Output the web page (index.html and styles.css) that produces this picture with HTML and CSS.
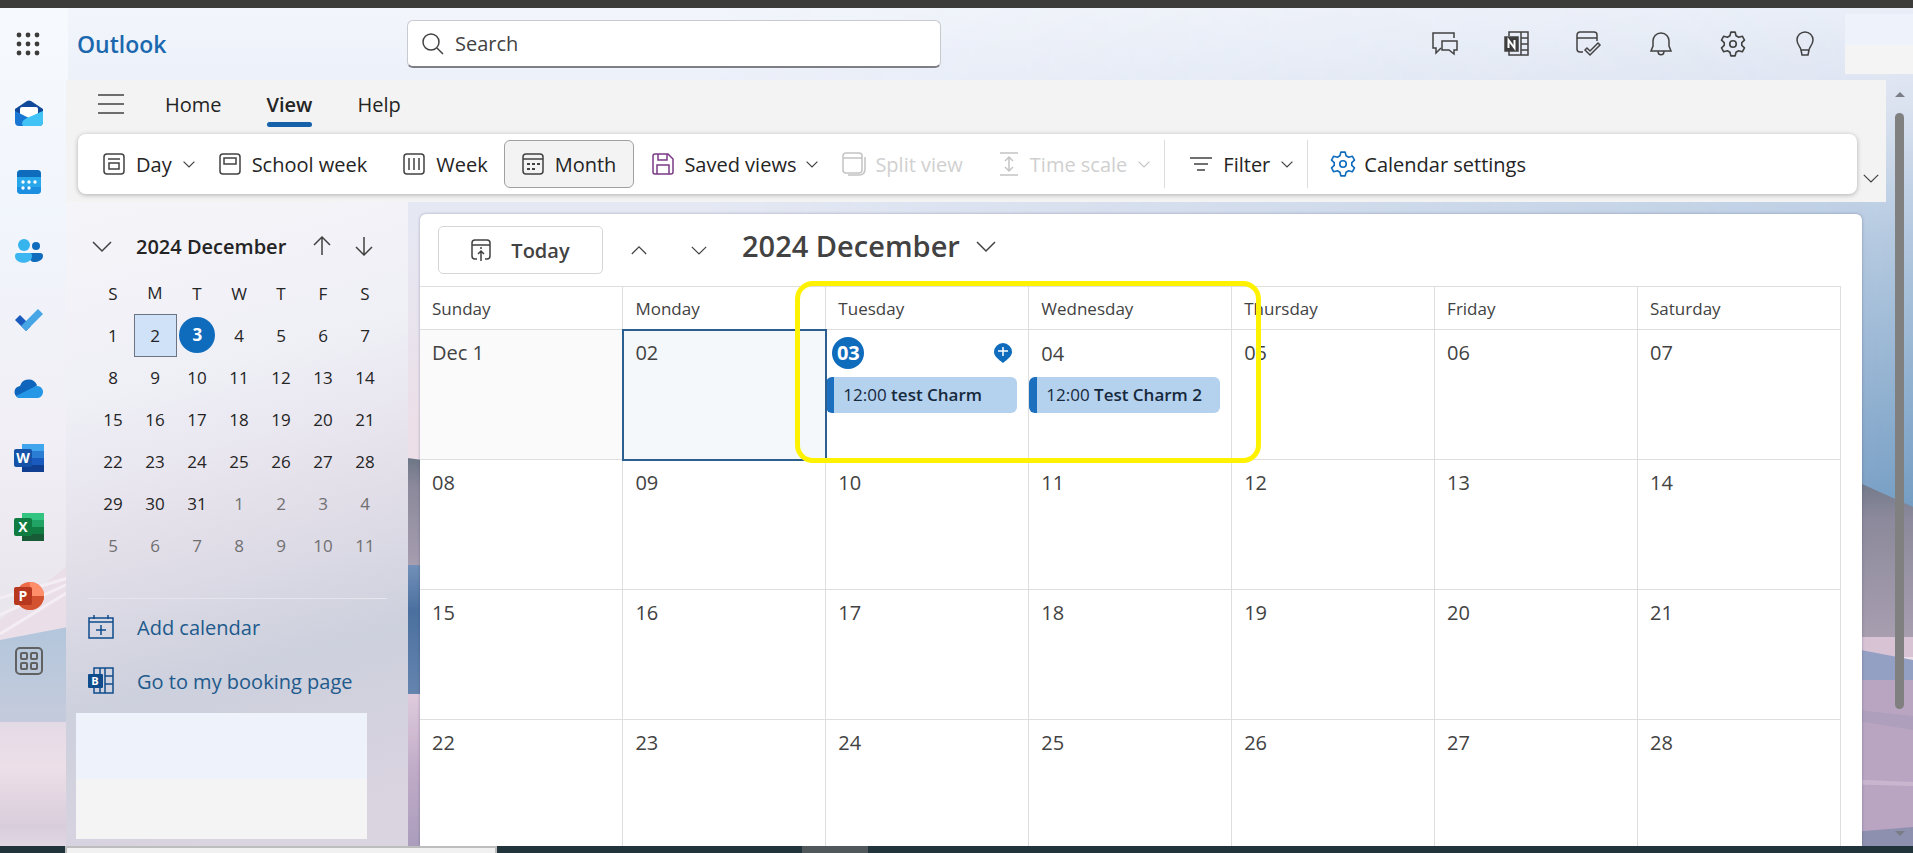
FILE: index.html
```html
<!DOCTYPE html>
<html lang="en">

<head>
    <meta charset="utf-8">
    <meta name="viewport" content="width=device-width, initial-scale=1">
    <title>Outlook Calendar</title>
    <link rel="stylesheet" href="styles.css">
</head>

<body>
    <!-- shared icons -->
    <svg class="defs" aria-hidden="true">
        <symbol id="down" viewBox="0 0 20 20"><path d="M1 6l9 9 9-9" /></symbol>
        <symbol id="up" viewBox="0 0 20 20"><path d="M1 15l9-9 9 9" /></symbol>
        <symbol id="gear" viewBox="0 0 24 24">
            <circle cx="12" cy="12" r="3" />
            <path d="M10 1h4l.8 3.400 2.400 1.400 3.400-1 2 3.600-2.500 2.300v2.600l2.500 2.300-2 3.600-3.400-1-2.400 1.400L14 23h-4l-.8-3.400-2.400-1.400-3.400 1-2-3.600 2.500-2.300v-2.600L1.400 8.400l2-3.600 3.400 1 2.400-1.400z" stroke-linejoin="round" />
        </symbol>
    </svg>

    <!-- wallpaper -->
    <svg class="wallpaper" viewBox="0 0 1913 853" preserveAspectRatio="none" aria-hidden="true">
        <defs>
            <linearGradient id="sky" x2="0" y2="1">
                <stop offset="0" stop-color="#f3f6fc" />
                <stop offset=".2" stop-color="#e4eaf6" />
                <stop offset=".5" stop-color="#ecdfe8" />
            </linearGradient>
            <linearGradient id="skyRight" x2="0" y2="1">
                <stop offset="0" stop-color="#e9eef7" />
                <stop offset=".2" stop-color="#dbe2f0" />
                <stop offset=".45" stop-color="#b4c9e0" />
                <stop offset="1" stop-color="#719bc2" />
            </linearGradient>
            <linearGradient id="fade">
                <stop offset="0" stop-color="#fff" stop-opacity="0" />
                <stop offset="1" stop-color="#fff" />
            </linearGradient>
            <mask id="fadeMask"><rect x="700" width="1213" height="520" fill="url(#fade)" /></mask>
            <linearGradient id="rock" x2="0" y2="1">
                <stop offset="0" stop-color="#6c7686" />
                <stop offset=".25" stop-color="#8b899b" />
                <stop offset="1" stop-color="#aaa0b2" />
            </linearGradient>
            <linearGradient id="lake" x2="0" y2="1">
                <stop offset="0" stop-color="#7290b8" />
                <stop offset=".35" stop-color="#4b709f" />
                <stop offset="1" stop-color="#6585af" />
            </linearGradient>
            <linearGradient id="sand" x2="0" y2="1">
                <stop offset="0" stop-color="#dfcbdc" />
                <stop offset=".5" stop-color="#bfaac7" />
                <stop offset="1" stop-color="#a99cbb" />
            </linearGradient>
            <linearGradient id="railSky" x2="0" y2="1">
                <stop offset="0" stop-color="#f7fafd" />
                <stop offset=".25" stop-color="#f1f5fc" />
                <stop offset=".5" stop-color="#f2eff6" />
                <stop offset=".7" stop-color="#e9e6ee" />
            </linearGradient>
            <linearGradient id="railLake" x2="0" y2="1">
                <stop offset="0" stop-color="#b3c6dc" />
                <stop offset="1" stop-color="#c5cbdc" />
            </linearGradient>
            <linearGradient id="railSand" x2="0" y2="1">
                <stop offset="0" stop-color="#e4dae6" />
                <stop offset=".35" stop-color="#ecdfe8" />
                <stop offset=".8" stop-color="#d9cddc" />
                <stop offset="1" stop-color="#e4dce6" />
            </linearGradient>
        </defs>
        <rect width="1913" height="853" fill="url(#sky)" />
        <rect x="700" width="1213" height="520" fill="url(#skyRight)" mask="url(#fadeMask)" />
        <path d="M400 457l60 8v110h-60z" fill="url(#rock)" />
        <path d="M400 565h60v130h-60z" fill="url(#lake)" />
        <path d="M400 694h60v159h-60z" fill="url(#sand)" />
        <path d="M1840 474l73 33v140h-73z" fill="url(#rock)" />
        <path d="M1840 637h73v20h-73z" fill="#d8c3d5" />
        <path d="M1840 646l73 14v28h-73z" fill="#939fc3" />
        <path d="M1840 680h73v173h-73z" fill="#b9a5c2" />
        <path d="M1840 708l73 8v14l-73-12z" fill="#ae9fbd" />
        <path d="M1840 779l73 3v4l-73-2z" fill="#c9b6ce" />
        <path d="M1840 833l73-6v26h-73z" fill="#8d90ae" />
        <rect width="68" height="853" fill="url(#railSky)" />
        <path d="M0 620l68-55v65l-68 10z" fill="#eadfe9" />
        <path d="M0 634l68-42M0 615l68-31M0 598l68-20" stroke="#f4eef4" stroke-width="3" />
        <path d="M0 640l68-13v96H0z" fill="url(#railLake)" />
        <path d="M0 722h68v131H0z" fill="url(#railSand)" />
    </svg>

    <div class="browser-edge"></div>

    <header class="header">
        <button class="waffle" aria-label="App launcher">
            <svg width="24" height="24" viewBox="0 0 24 24" fill="#3c3c3c">
                <circle cx="3" cy="3" r="2.400" /><circle cx="12" cy="3" r="2.400" /><circle cx="21" cy="3" r="2.400" />
                <circle cx="3" cy="12" r="2.400" /><circle cx="12" cy="12" r="2.400" /><circle cx="21" cy="12" r="2.400" />
                <circle cx="3" cy="21" r="2.400" /><circle cx="12" cy="21" r="2.400" /><circle cx="21" cy="21" r="2.400" />
            </svg>
        </button>
        <a class="brand" href="#">Outlook</a>
        <label class="search">
            <svg class="icon" width="22" height="22" viewBox="0 0 22 22"><circle cx="9" cy="9" r="8" /><path d="M15 15l6 6" /></svg>
            <input type="search" placeholder="Search" aria-label="Search">
        </label>
        <nav class="header-actions">
            <button aria-label="Chat">
                <svg class="icon" width="26" height="26" viewBox="0 0 26 26"><path d="M22 7V2H1v15h3v5l5-5" /><path d="M10 10h15v9h-3v4l-5-4h-7z" /></svg>
            </button>
            <button aria-label="OneNote feed">
                <svg class="icon" width="26" height="26" viewBox="0 0 26 26"><path d="M5 5V1h19v23H5v-4M17 1v23M17 7h7M17 13h7M17 19h7" /><rect x="1" y="6" width="13" height="14" fill="#3c3c3c" /><path d="M4.500 17V9l6 8V9" stroke="#fff" stroke-width="2" /></svg>
            </button>
            <button aria-label="My day">
                <svg class="icon" width="26" height="26" viewBox="0 0 26 26"><path d="M7 21H4a3 3 0 0 1-3-3V4a3 3 0 0 1 3-3h14a3 3 0 0 1 3 3v6M1 7h20" /><path d="M9 19l2-2 3 3 8-8 2 2-10 10z" /></svg>
            </button>
            <button aria-label="Notifications">
                <svg class="icon" width="26" height="26" viewBox="0 0 26 26"><path d="M13 2c-5 0-8 4-8 8v5l-2 5h20l-2-5v-5c0-4-3-8-8-8zM10 20c0 5 6 5 6 0" /></svg>
            </button>
            <button aria-label="Settings">
                <svg class="icon" width="26" height="26"><use href="#gear" /></svg>
            </button>
            <button aria-label="Tips">
                <svg class="icon" width="26" height="26" viewBox="0 0 26 26"><path d="M9 19c0-3-4-5-4-10a8 8 0 0 1 16 0c0 5-4 7-4 10zM9 19l1 5h6l1-5" /></svg>
            </button>
        </nav>
        <div class="account"></div>
    </header>

    <div class="app">
        <nav class="rail">
            <a href="#" aria-label="Mail">
                <svg width="30" height="28" viewBox="0 0 30 28"><path d="M1 10L13 2q2-1 4 0l12 8v6H1z" fill="#10489a" /><rect x="6" y="8" width="18" height="12" rx="2" fill="#fff" /><path d="M1 12l14 7 14-7v11q0 4-4 4H5q-4 0-4-4z" fill="#1976d2" /><path d="M29 12v11q0 4-4 4H9q-3-5 4-8z" fill="#41c3f5" /></svg>
            </a>
            <a href="#" aria-label="Calendar">
                <svg width="26" height="26" viewBox="0 0 26 26"><rect x="1" y="1" width="24" height="24" rx="4" fill="#28a8ea" /><path d="M1 8V5q0-4 4-4h16q4 0 4 4v3z" fill="#0f6cbd" /><path d="M1 18h24v3q0 4-4 4H5q-4 0-4-4z" fill="#1c8fe0" /><g fill="#fff"><circle cx="7" cy="13" r="1.700" /><circle cx="13" cy="13" r="1.700" /><circle cx="19" cy="13" r="1.700" /><circle cx="7" cy="19" r="1.700" /><circle cx="13" cy="19" r="1.700" /></g></svg>
            </a>
            <a href="#" aria-label="People">
                <svg width="30" height="24" viewBox="0 0 30 24"><circle cx="22" cy="7" r="4" fill="#0f6cbd" /><path d="M16 14h10q3 0 3 3c0 4-5 6-9 6-3 0-4-2-4-4z" fill="#0f6cbd" /><circle cx="10" cy="6" r="6" fill="#36b4ee" /><path d="M4 14h12q2 0 2 3c0 9-17 9-17 0q0-3 3-3z" fill="#3cb6f0" /></svg>
            </a>
            <a href="#" aria-label="To Do">
                <svg width="30" height="24" viewBox="0 0 30 24"><path d="M1 12l5-5 11 11-5 5z" fill="#185abd" /><path d="M7 18L24 1l5 5-17 17z" fill="#45a5e5" /></svg>
            </a>
            <a href="#" aria-label="OneDrive">
                <svg width="30" height="20" viewBox="0 0 30 20"><path d="M7 19a6 6 0 0 1-1-12 9 9 0 0 1 17-1l-8 9z" fill="#0f65bb" /><path d="M5 19q-2 0-3-2l16-8 4-2a6 6 0 0 1 2 12z" fill="#2697e6" /></svg>
            </a>
            <a href="#" aria-label="Word">
                <svg width="30" height="28" viewBox="0 0 30 28"><path d="M8 0h22v7H8z" fill="#41a5ee" /><path d="M8 7h22v7H8z" fill="#2b7cd3" /><path d="M8 14h22v7H8z" fill="#185abd" /><path d="M8 21h22v7H8z" fill="#103f91" /><rect y="5" width="18" height="18" rx="2" fill="#1653a8" /><text class="app-letter" x="9" y="19">W</text></svg>
            </a>
            <a href="#" aria-label="Excel">
                <svg width="30" height="28" viewBox="0 0 30 28"><path d="M8 0h22v7H8z" fill="#33c481" /><path d="M8 7h22v7H8z" fill="#21a366" /><path d="M8 14h22v7H8z" fill="#107c41" /><path d="M8 21h22v7H8z" fill="#185c37" /><rect y="5" width="18" height="18" rx="2" fill="#107c41" /><text class="app-letter" x="9" y="19">X</text></svg>
            </a>
            <a href="#" aria-label="PowerPoint">
                <svg width="30" height="28" viewBox="0 0 30 28"><circle cx="16" cy="14" r="14" fill="#ed6c47" /><path d="M16 0a14 14 0 0 1 14 14H16z" fill="#ff8f6b" /><path d="M2 14h28a14 14 0 0 1-28 0z" fill="#d35230" /><rect y="5" width="18" height="18" rx="2" fill="#b7371f" /><text class="app-letter" x="9" y="19">P</text></svg>
            </a>
            <a class="more-apps" href="#" aria-label="More apps">
                <svg width="28" height="28" viewBox="0 0 28 28" fill="none" stroke="#616161" stroke-width="2"><rect x="1" y="1" width="26" height="26" rx="4" /><rect x="6" y="6" width="6" height="6" rx="1" /><rect x="16" y="6" width="6" height="6" rx="1" /><rect x="6" y="16" width="6" height="6" rx="1" /><rect x="16" y="16" width="6" height="6" rx="1" /></svg>
            </a>
        </nav>

        <div class="main">
            <div class="ribbon">
                <div class="tabs">
                    <button class="hamburger" aria-label="Toggle navigation pane">
                        <svg class="icon" width="26" height="20" viewBox="0 0 26 20"><path d="M0 1h26M0 10h26M0 19h26" /></svg>
                    </button>
                    <button class="tab">Home</button>
                    <button class="tab active">View</button>
                    <button class="tab">Help</button>
                </div>
                <div class="ribbon-row">
                    <div class="toolbar">
                        <button class="tool tool-day">
                            <svg class="icon" width="22" height="22" viewBox="0 0 22 22"><rect x="1" y="1" width="20" height="20" rx="3" /><path d="M5 6h12M6 10h10v6H6z" /></svg>
                            Day
                            <svg class="icon chev" width="12" height="12"><use href="#down" /></svg>
                        </button>
                        <button class="tool tool-school">
                            <svg class="icon" width="22" height="22" viewBox="0 0 22 22"><rect x="1" y="1" width="20" height="20" rx="3" /><path d="M5 5h12v6H5z" /></svg>
                            School week
                        </button>
                        <button class="tool tool-week">
                            <svg class="icon" width="22" height="22" viewBox="0 0 22 22"><rect x="1" y="1" width="20" height="20" rx="3" /><path d="M6 5v12M11 5v12M16 5v12" /></svg>
                            Week
                        </button>
                        <button class="tool selected">
                            <svg class="icon" width="22" height="22" viewBox="0 0 22 22"><rect x="1" y="1" width="20" height="20" rx="3" /><path d="M1 6h20" /><path d="M5 11h3M10 11h3M15 11h3M5 16h3M10 16h3" stroke-width="2" /></svg>
                            Month
                        </button>
                        <button class="tool tool-saved">
                            <svg class="icon purple" width="22" height="22" viewBox="0 0 22 22"><path d="M1 3q0-2 2-2h13l5 5v13q0 2-2 2H3q-2 0-2-2zM6 1v6h9V1M5 21v-9h12v9" /></svg>
                            Saved views
                            <svg class="icon chev" width="12" height="12"><use href="#down" /></svg>
                        </button>
                        <button class="tool tool-split" disabled>
                            <svg class="icon" width="24" height="24" viewBox="0 0 24 24"><rect x="1" y="1" width="19" height="20" rx="3" /><path d="M1 6h19M6 23h11q6 0 6-6V5" /></svg>
                            Split view
                        </button>
                        <button class="tool tool-scale" disabled>
                            <svg class="icon" width="20" height="24" viewBox="0 0 20 24"><path d="M1 1h18M1 23h18M10 5v14M6 9l4-4 4 4M6 15l4 4 4-4" /></svg>
                            Time scale
                            <svg class="icon chev" width="12" height="12"><use href="#down" /></svg>
                        </button>
                        <button class="tool tool-filter">
                            <svg class="icon" width="22" height="20" viewBox="0 0 22 20"><path d="M0 4h22M4 10h14M7 16h8" /></svg>
                            Filter
                            <svg class="icon chev" width="12" height="12"><use href="#down" /></svg>
                        </button>
                        <button class="tool tool-settings">
                            <svg class="icon blue" width="26" height="26"><use href="#gear" /></svg>
                            Calendar settings
                        </button>
                    </div>
                    <button class="expand" aria-label="Ribbon display options">
                        <svg class="icon" width="16" height="16"><use href="#down" /></svg>
                    </button>
                </div>
            </div>

            <div class="content">
                <aside class="sidebar">
                    <div class="mini-head">
                        <button aria-label="Collapse"><svg class="icon" width="22" height="20"><use href="#down" /></svg></button>
                        <h2>2024 December</h2>
                        <button aria-label="Previous month"><svg class="icon" width="18" height="20" viewBox="0 0 18 20"><path d="M9 19V1M1 9l8-8 8 8" /></svg></button>
                        <button aria-label="Next month"><svg class="icon" width="18" height="20" viewBox="0 0 18 20"><path d="M9 1v18M1 11l8 8 8-8" /></svg></button>
                    </div>
                    <table class="mini">
                        <thead>
                            <tr><th>S</th><th>M</th><th>T</th><th>W</th><th>T</th><th>F</th><th>S</th></tr>
                        </thead>
                        <tbody>
                            <tr><td>1</td><td class="picked">2</td><td><span class="today">3</span></td><td>4</td><td>5</td><td>6</td><td>7</td></tr>
                            <tr><td>8</td><td>9</td><td>10</td><td>11</td><td>12</td><td>13</td><td>14</td></tr>
                            <tr><td>15</td><td>16</td><td>17</td><td>18</td><td>19</td><td>20</td><td>21</td></tr>
                            <tr><td>22</td><td>23</td><td>24</td><td>25</td><td>26</td><td>27</td><td>28</td></tr>
                            <tr><td>29</td><td>30</td><td>31</td><td class="other">1</td><td class="other">2</td><td class="other">3</td><td class="other">4</td></tr>
                            <tr class="other"><td>5</td><td>6</td><td>7</td><td>8</td><td>9</td><td>10</td><td>11</td></tr>
                        </tbody>
                    </table>
                    <div class="side-links">
                        <a href="#">
                            <svg class="icon" width="26" height="26" viewBox="0 0 26 26"><path d="M1 4h24v20H1zM1 8h24M6 1v4M20 1v4M13 11v10M8 16h10" /></svg>
                            Add calendar
                        </a>
                        <a href="#">
                            <svg class="icon" width="26" height="28" viewBox="0 0 26 28"><path d="M6 7V1h19v25H6v-6M12 1v25M17 1v25M17 9h8M17 17h8" /><rect y="7" width="15" height="14" rx="1" fill="#0f4c8c" stroke="none" /><text class="book-letter" x="7" y="18">B</text></svg>
                            Go to my booking page
                        </a>
                    </div>
                    <div class="side-box"></div>
                </aside>

                <section class="calendar">
                    <div class="cal-head">
                        <button class="today-btn">
                            <svg class="icon" width="20" height="22" viewBox="0 0 20 22"><path d="M6 20H4q-3 0-3-3V4q0-3 3-3h12q3 0 3 3v13q0 3-3 3h-2M1 6h18M10 22v-9M7 15l3-3 3 3M10 8v2" /></svg>
                            Today
                        </button>
                        <button class="step" aria-label="Previous"><svg class="icon" width="16" height="16"><use href="#up" /></svg></button>
                        <button class="step" aria-label="Next"><svg class="icon" width="16" height="16"><use href="#down" /></svg></button>
                        <button class="month-btn">2024 December <svg class="icon" width="20" height="20"><use href="#down" /></svg></button>
                    </div>
                    <div class="grid-wrap">
                        <table class="grid">
                            <thead>
                                <tr><th>Sunday</th><th>Monday</th><th>Tuesday</th><th>Wednesday</th><th>Thursday</th><th>Friday</th><th>Saturday</th></tr>
                            </thead>
                            <tbody>
                                <tr>
                                    <td class="past">Dec 1</td>
                                    <td class="chosen">02</td>
                                    <td>
                                        <div class="day-row">
                                            <span class="today">03</span>
                                            <svg class="charm" width="18" height="20" viewBox="0 0 18 20"><path d="M9 0a9 9 0 0 1 9 9c0 4-4 7-9 11C4 16 0 13 0 9a9 9 0 0 1 9-9z" fill="#0f6cbd" /><path d="M9 4v9M4 8h10" stroke="#fff" stroke-width="1.500" /></svg>
                                        </div>
                                        <a class="event" href="#">12:00 <b>test Charm</b></a>
                                    </td>
                                    <td>
                                        <div class="day-row">04</div>
                                        <a class="event" href="#">12:00 <b>Test Charm 2</b></a>
                                    </td>
                                    <td>05</td>
                                    <td>06</td>
                                    <td>07</td>
                                </tr>
                                <tr><td>08</td><td>09</td><td>10</td><td>11</td><td>12</td><td>13</td><td>14</td></tr>
                                <tr><td>15</td><td>16</td><td>17</td><td>18</td><td>19</td><td>20</td><td>21</td></tr>
                                <tr><td>22</td><td>23</td><td>24</td><td>25</td><td>26</td><td>27</td><td>28</td></tr>
                            </tbody>
                        </table>
                        <div class="highlight"></div>
                    </div>
                </section>
            </div>
        </div>

        <div class="scrollbar">
            <i class="arrow-up"></i>
            <div class="track"><div class="thumb"></div></div>
            <i class="arrow-down"></i>
        </div>
    </div>

    <footer class="taskbar">
        <div class="status"></div>
        <div class="task"></div>
    </footer>
</body>

</html>
```
FILE: styles.css
```css
* {
    box-sizing: border-box;
}

body {
    display: flex;
    flex-direction: column;
    height: 100vh;
    margin: 0;
    overflow: hidden;
    font-family: "Open Sans", "Noto Sans", sans-serif;
    font-size: 20px;
    color: #242424;
}

button {
    padding: 0;
    border: 0;
    background: none;
    font: inherit;
    color: inherit;
    white-space: nowrap;
}

a {
    color: inherit;
    text-decoration: none;
}

svg {
    flex: none;
    display: block;
}

.defs {
    position: absolute;
    width: 0;
    height: 0;
}

.wallpaper {
    position: absolute;
    z-index: -1;
    width: 100%;
    height: 100%;
}

.icon {
    fill: none;
    stroke: #424242;
    stroke-width: 1.5;
}

.browser-edge {
    flex: none;
    height: 8px;
    background: #3c3d3b;
}

/* header */
.header {
    flex: none;
    display: flex;
    align-items: center;
    height: 72px;
}

.waffle {
    margin: 0 37px 0 16px;
}

.brand {
    width: 330px;
    font-size: 23px;
    font-weight: 600;
    color: #1b68ae;
}

.search {
    display: flex;
    align-items: center;
    gap: 11px;
    width: 534px;
    height: 48px;
    padding: 0 14px;
    border: 1px solid #c8cad0;
    border-bottom: 2px solid #7d7f85;
    border-radius: 6px;
    background: #fff;
}

.search input {
    flex: 1;
    min-width: 0;
    padding: 0;
    border: 0;
    outline: 0;
    background: none;
    font: inherit;
}

.search input::placeholder {
    color: #424242;
    opacity: 1;
}

.header-actions {
    display: flex;
    gap: 46px;
    margin-left: auto;
    margin-right: 27px;
}

.account {
    width: 68px;
    height: 60px;
    background: linear-gradient(#edf2fb 52%, #f4f4f4 52%);
}

/* left rail */
.app {
    flex: 1;
    display: flex;
    min-height: 0;
}

.rail {
    flex: none;
    display: flex;
    flex-direction: column;
    width: 66px;
}

.rail a {
    display: flex;
    align-items: center;
    justify-content: center;
    width: 58px;
    height: 69px;
    padding-bottom: 4px;
}

.rail .more-apps {
    height: 62px;
}

.app-letter,
.book-letter {
    font-size: 14px;
    font-weight: 700;
    text-anchor: middle;
    fill: #fff;
    stroke: none;
}

.book-letter {
    font-size: 11px;
}

/* ribbon */
.main {
    flex: 1;
    display: flex;
    flex-direction: column;
    min-width: 0;
}

.ribbon {
    flex: none;
    height: 122px;
    background: #f3f3f3;
}

.tabs {
    display: flex;
    align-items: center;
    height: 54px;
    padding-left: 32px;
}

.hamburger {
    margin-right: 41px;
    padding-bottom: 6px;
}

.tab {
    height: 50px;
    margin-right: 45px;
    padding-bottom: 5px;
}

.tab.active {
    padding: 3px 0 0;
    font-weight: 600;
}

.tab.active::after {
    content: "";
    display: block;
    height: 5px;
    margin-top: 4px;
    border-radius: 3px;
    background: #1562ab;
}

.ribbon-row {
    display: flex;
    padding-left: 12px;
}

.toolbar {
    flex: 1;
    display: flex;
    align-items: center;
    height: 60px;
    padding-left: 25px;
    border-radius: 8px;
    background: #fff;
    box-shadow: 0 1px 5px rgba(0, 0, 0, .28);
}

.tool {
    display: flex;
    align-items: center;
    gap: 11px;
    height: 48px;
}

.tool .chev {
    stroke-width: 2;
}

.tool-day {
    margin-right: 24px;
}

.tool-school {
    margin-right: 36px;
}

.tool-week {
    margin-right: 16px;
}

.tool.selected {
    margin-right: 18px;
    padding: 0 17px;
    border: 1px solid #a0a0a0;
    border-radius: 6px;
    background: #f3f3f3;
}

.tool-saved {
    gap: 10px;
    margin-right: 24px;
}

.tool-split {
    gap: 9px;
    margin-right: 36px;
}

.tool:disabled {
    color: #d0d0d0;
}

.tool:disabled .icon {
    stroke: #c4c4c4;
}

.tool-scale,
.tool-filter {
    padding-right: 14px;
    border-right: 1px solid #dcdcdc;
}

.tool-filter {
    padding-left: 25px;
}

.tool-settings {
    gap: 8px;
    padding-left: 22px;
}

.icon.purple {
    stroke: #7b3a86;
}

.icon.blue {
    stroke: #0f6cbd;
}

.expand {
    width: 29px;
    padding: 28px 0 0 6px;
}

/* folder pane */
.content {
    flex: 1;
    display: flex;
    min-height: 0;
}

.sidebar {
    flex: none;
    width: 342px;
    padding: 28px 10px 0;
    background: linear-gradient(165deg, #f5f5f9, #efeff6 28%, #e4e0ea 48%, #cdd0dd 70%, #dad3e0 92%);
}

.mini-head {
    display: flex;
    align-items: center;
    height: 32px;
    padding-left: 15px;
}

.mini-head h2 {
    width: 177px;
    margin: 0 0 0 23px;
    font-size: 20px;
    font-weight: 600;
    white-space: nowrap;
}

.mini-head button:last-child {
    margin-left: 24px;
}

.mini {
    margin: 10px 0 0 16px;
    border-collapse: collapse;
    font-size: 17px;
    text-align: center;
}

.mini th,
.mini td {
    width: 42px;
    height: 42px;
    padding: 0;
    font-weight: 400;
}

.mini .picked {
    border: 1px solid #6b7482;
    background: #cfe2f8;
}

.mini .today {
    display: block;
    width: 36px;
    margin: 0 auto;
    border-radius: 50%;
    background: #0f6cbd;
    font-weight: 700;
    line-height: 36px;
    color: #fff;
}

.other {
    color: #707070;
}

.side-links {
    display: flex;
    flex-direction: column;
    gap: 26px;
    margin: 32px 11px 0 12px;
    padding-top: 14px;
    border-top: 1px solid #e6e4ec;
}

.side-links a {
    display: flex;
    align-items: center;
    gap: 23px;
    height: 28px;
    white-space: nowrap;
    color: #215a8c;
}

.side-links .icon {
    stroke: #0f4c8c;
}

.side-box {
    width: 291px;
    height: 126px;
    margin-top: 18px;
    background: linear-gradient(#edf2fb 52%, #f4f4f4 52%);
}

/* month view */
.calendar {
    flex: 1;
    min-width: 0;
    margin: 12px 24px 0 12px;
    overflow: hidden;
    border-radius: 6px 6px 0 0;
    background: #fff;
    box-shadow: 0 0 3px rgba(60, 60, 100, .4);
    color: #424242;
}

.cal-head {
    display: flex;
    align-items: center;
    height: 72px;
    padding-left: 18px;
}

.today-btn {
    display: flex;
    align-items: center;
    justify-content: center;
    gap: 20px;
    width: 165px;
    height: 48px;
    margin-right: 28px;
    border: 1px solid #d6d6d6;
    border-radius: 5px;
    font-weight: 600;
}

.step {
    margin-right: 44px;
}

.step + .step {
    margin-right: 35px;
}

.month-btn {
    display: flex;
    align-items: center;
    gap: 16px;
    padding-bottom: 8px;
    font-size: 29px;
    font-weight: 600;
    line-height: 48px;
}

.grid-wrap {
    position: relative;
    margin-right: 21px;
}

.grid {
    width: 100%;
    table-layout: fixed;
    border-collapse: collapse;
}

.grid th,
.grid td {
    padding: 0 0 0 12px;
    border: 1px solid #dedede;
    text-align: left;
}

.grid th:first-child,
.grid td:first-child {
    border-left: 0;
}

.grid th {
    height: 43px;
    font-size: 17px;
    font-weight: 400;
}

.grid td {
    height: 130px;
    padding-top: 9px;
    vertical-align: top;
}

.grid .past {
    background: #fafafa;
}

.grid .chosen {
    outline: 2px solid #2b5f8f;
    outline-offset: -1px;
    background: #f5f8fb;
}

.day-row {
    display: flex;
    align-items: center;
    justify-content: space-between;
    height: 28px;
    padding-right: 16px;
}

.grid .today {
    width: 32px;
    margin-left: -6px;
    border-radius: 50%;
    background: #0f6cbd;
    font-weight: 700;
    line-height: 32px;
    text-align: center;
    color: #fff;
}

.event {
    display: block;
    height: 36px;
    margin: 10px 11px 0 -12px;
    padding-left: 9px;
    border-left: 8px solid #1b6fbe;
    border-radius: 6px;
    background: #b4d1ed;
    font-size: 17px;
    line-height: 36px;
    white-space: nowrap;
    color: #16293d;
}

.event b {
    font-weight: 600;
}

.highlight {
    position: absolute;
    top: -5px;
    left: 26.4%;
    width: 32.8%;
    height: 182px;
    border: 5px solid #fff200;
    border-radius: 18px;
}

/* page scrollbar */
.scrollbar {
    flex: none;
    display: flex;
    flex-direction: column;
    align-items: center;
    width: 27px;
    padding: 12px 0 10px;
}

.arrow-up,
.arrow-down {
    border: 5px solid transparent;
    border-top-width: 0;
    border-bottom: 5px solid #7a7d86;
}

.arrow-down {
    border-top: 5px solid #7a7d86;
    border-bottom-width: 0;
}

.track {
    flex: 1;
    padding: 16px 0 8px;
}

.thumb {
    width: 9px;
    height: 84%;
    border-radius: 5px;
    background: #808080;
}

.taskbar {
    flex: none;
    display: flex;
    height: 7px;
    padding-left: 65px;
    background: #22343b;
}

.status {
    width: 432px;
    border: 2px solid #bdbdbd;
    border-bottom: 0;
    background: #f1f1f1;
}

.task {
    width: 66px;
    margin-left: 305px;
    background: #50585c;
}
```
